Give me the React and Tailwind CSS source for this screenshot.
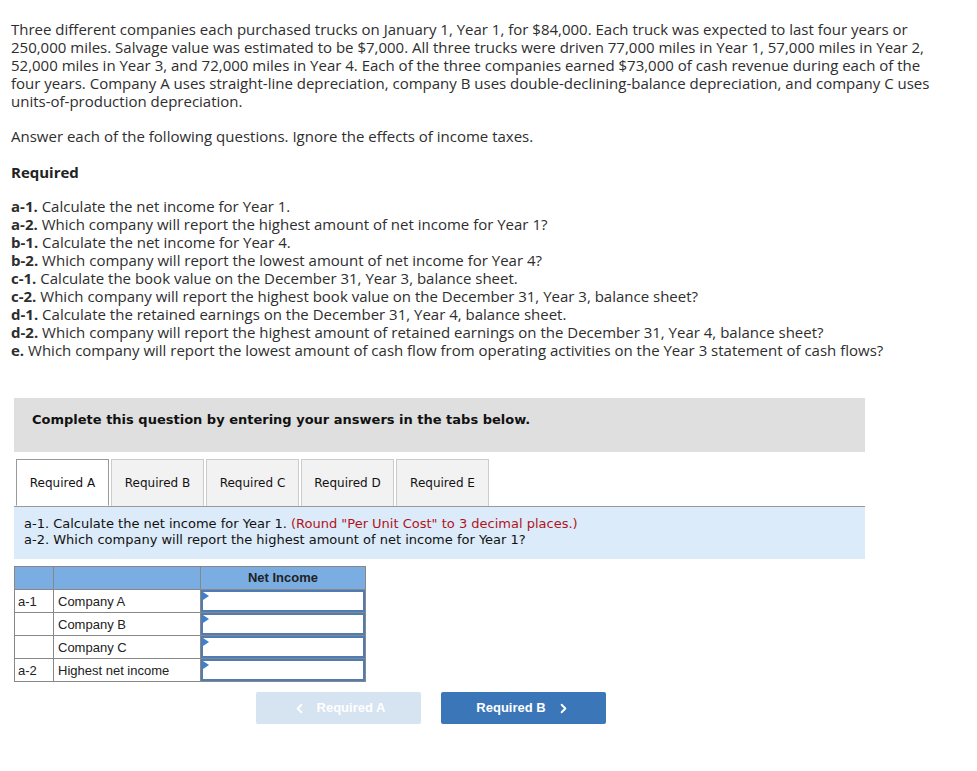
import { ChevronLeft, ChevronRight } from "lucide-react";

const questions = [
  ["a-1.", "Calculate the net income for Year 1."],
  ["a-2.", "Which company will report the highest amount of net income for Year 1?"],
  ["b-1.", "Calculate the net income for Year 4."],
  ["b-2.", "Which company will report the lowest amount of net income for Year 4?"],
  ["c-1.", "Calculate the book value on the December 31, Year 3, balance sheet."],
  ["c-2.", "Which company will report the highest book value on the December 31, Year 3, balance sheet?"],
  ["d-1.", "Calculate the retained earnings on the December 31, Year 4, balance sheet."],
  ["d-2.", "Which company will report the highest amount of retained earnings on the December 31, Year 4, balance sheet?"],
  ["e.", "Which company will report the lowest amount of cash flow from operating activities on the Year 3 statement of cash flows?"],
];

const tabs = ["Required A", "Required B", "Required C", "Required D", "Required E"];

const rows = [
  ["a-1", "Company A"],
  ["", "Company B"],
  ["", "Company C"],
  ["a-2", "Highest net income"],
];

function InputCell() {
  return (
    <td className="border border-[#888] p-0 h-[23px]">
      <div className="relative h-[22px] border-2 border-[#4f7cb3] bg-white">
        <span className="absolute left-0 top-0 w-0 h-0 border-t-[4px] border-b-[4px] border-l-[6px] border-t-transparent border-b-transparent border-l-[#3f7fd0]" />
      </div>
    </td>
  );
}

export default function App() {
  return (
    <div className="min-h-screen bg-white text-[#2e2e2e] font-['Open_Sans',sans-serif]">
      <div className="pl-[11px] pr-4 pt-[20px]">
        <p className="text-[15px] leading-[18px] whitespace-nowrap">
          Three different companies each purchased trucks on January 1, Year 1, for $84,000. Each truck was expected to last four years or
          <br />
          250,000 miles. Salvage value was estimated to be $7,000. All three trucks were driven 77,000 miles in Year 1, 57,000 miles in Year 2,
          <br />
          52,000 miles in Year 3, and 72,000 miles in Year 4. Each of the three companies earned $73,000 of cash revenue during each of the
          <br />
          four years. Company A uses straight-line depreciation, company B uses double-declining-balance depreciation, and company C uses
          <br />
          units-of-production depreciation.
        </p>

        <p className="text-[15px] leading-[18px] mt-[17px]">
          Answer each of the following questions. Ignore the effects of income taxes.
        </p>

        <p className="text-[15px] leading-[18px] mt-[18px] font-bold text-[#222]">Required</p>

        <div className="mt-[16px] text-[15px] leading-[18px]">
          {questions.map(([label, text]) => (
            <p key={label}>
              <span className="font-bold">{label}</span> {text}
            </p>
          ))}
        </div>
      </div>

      <div className="ml-[14px] w-[851px] mt-[39px] font-['DejaVu_Sans',Verdana,sans-serif]">
        <div className="bg-[#dfdfdf] h-[54px] flex items-center pl-[18px] pb-[10px]">
          <span className="text-[13px] font-bold text-[#111]">
            Complete this question by entering your answers in the tabs below.
          </span>
        </div>

        <div className="mt-[7px] flex gap-[2px] pl-[2px] border-b border-[#999]">
          {tabs.map((t, i) => (
            <div
              key={t}
              className={
                i === 0
                  ? "w-[93px] h-[47px] -mb-px flex items-center justify-center text-[12px] text-[#111] bg-white border border-[#999] border-b-white"
                  : "w-[93px] h-[47px] flex items-center justify-center text-[12px] text-[#111] bg-[#f2f2f2] border border-b-0 border-[#ccc]"
              }
            >
              {t}
            </div>
          ))}
        </div>

        <div className="bg-[#dbebf9] h-[52px] pl-[10px] pt-[9px] text-[13px] leading-[16px] text-[#111]">
          <p>
            a-1. Calculate the net income for Year 1.{" "}
            <span className="text-[#b3121b]">(Round "Per Unit Cost" to 3 decimal places.)</span>
          </p>
          <p>a-2. Which company will report the highest amount of net income for Year 1?</p>
        </div>

        <table className="mt-[7px] border-collapse font-['Liberation_Sans',Arial,sans-serif] text-[13px] text-[#222]">
          <thead>
            <tr className="bg-[#7aaee2] h-[23px]">
              <th className="border border-[#888] w-[39px]" />
              <th className="border border-[#888] w-[147px]" />
              <th className="border border-[#888] w-[165px] font-bold text-[13px] text-[#222]">Net Income</th>
            </tr>
          </thead>
          <tbody>
            {rows.map(([code, name], i) => (
              <tr key={i} className="h-[23px]">
                <td className="border border-[#888] px-[3px] pt-[1px]">{code}</td>
                <td className="border border-[#888] px-[4px] pt-[1px]">{name}</td>
                <InputCell />
              </tr>
            ))}
          </tbody>
        </table>

        <div className="mt-[10px] flex gap-[20px] pl-[242px] font-['Liberation_Sans',Arial,sans-serif]">
          <button className="w-[165px] h-[32px] rounded-[2px] bg-[#d6e3f1] text-white font-bold text-[13px] flex items-center justify-center gap-[10px]">
            <ChevronLeft size={15} strokeWidth={3} />
            Required A
          </button>
          <button className="w-[165px] h-[32px] rounded-[2px] bg-[#3a76b8] text-white font-bold text-[13px] flex items-center justify-center gap-[10px]">
            Required B
            <ChevronRight size={15} strokeWidth={3} />
          </button>
        </div>
      </div>
    </div>
  );
}
